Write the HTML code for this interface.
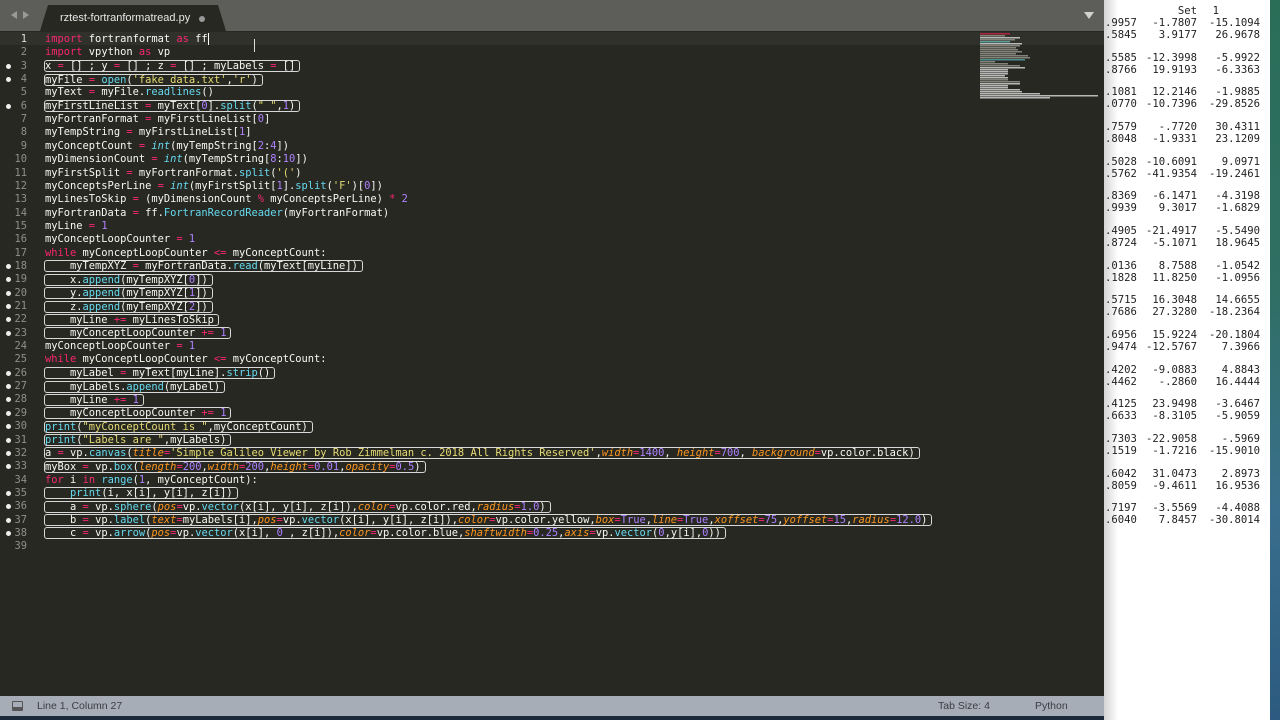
<!DOCTYPE html>
<html><head><meta charset="utf-8"><style>
*{margin:0;padding:0;box-sizing:border-box}
body{width:1280px;height:720px;overflow:hidden;background:#1c2b3b;position:relative;font-family:"DejaVu Sans Mono","Liberation Mono",monospace}
#tabbar{position:absolute;left:0;top:0;width:1104px;height:31px;background:#5d5e5a}
#tab{position:absolute;left:40px;top:5px;width:186px;height:26px;background:#272822;clip-path:polygon(8px 0,178px 0,186px 26px,0 26px)}
#tab span{position:absolute;left:20px;top:7px;font:11px "Liberation Sans",sans-serif;color:#e8e8e8}
#tab i{position:absolute;left:159px;top:11px;width:6px;height:6px;border-radius:50%;background:#999}
#editor{position:absolute;left:0;top:31px;width:1104px;height:665px;background:#272822}
#status{position:absolute;left:0;top:696px;width:1104px;height:20px;background:#a7adb7;font:10.5px "Liberation Sans",sans-serif;color:#3a3d44}
#lines{position:absolute;left:0;top:2px;width:1000px}
.ln{position:absolute;left:0;height:13.35px;width:1000px;font-size:10.4px;line-height:13.35px;color:#f8f8f2;white-space:pre}
.num{position:absolute;left:0;width:27px;text-align:right;color:#8f908a}
.dot{position:absolute;left:6px;top:4px;width:5px;height:5px;border-radius:50%;background:#eee}
.code{position:absolute;left:45px}
.bx{display:inline-block;height:12px;line-height:11px;border:1px solid #d8d8d8;border-radius:3px;margin-left:-1px;padding:0 4px 0 0;vertical-align:top;margin-top:0.5px}
.k{color:#f92672}.s{color:#e6db74}.n{color:#ae81ff}.f{color:#66d9ef}.i{color:#66d9ef;font-style:italic}.p{color:#fd971f;font-style:italic}.o{color:#f92672}
#right{position:absolute;left:1104px;top:0;width:166px;height:720px;background:#fff;font-size:10.6px;color:#222}
#right:before{content:"";position:absolute;left:0;top:0;width:14px;height:100%;background:linear-gradient(90deg,#d4d4d4,#fff)}
#desk{position:absolute;left:1270px;top:0;width:10px;height:720px;background:linear-gradient(#2a6e58,#2f6f64 40%,#3a6f8c 70%,#2c5a80)}
#data{position:absolute;left:0;top:2px}
.r{position:absolute;left:1105px;height:12px;line-height:12px;white-space:pre;font-size:10.6px;color:#222}
.r span{display:inline-block;text-align:right}
.r .a{width:33px;text-align:left}.r .b{width:59px}.r .c{width:63px}
</style></head><body>
<div id="tabbar">
<div style="position:absolute;left:11px;top:11px;width:0;height:0;border-top:4px solid transparent;border-bottom:4px solid transparent;border-right:6px solid #9a9a96"></div>
<div style="position:absolute;left:23px;top:11px;width:0;height:0;border-top:4px solid transparent;border-bottom:4px solid transparent;border-left:6px solid #9a9a96"></div>
<div id="tab"><span>rztest-fortranformatread.py</span><i></i></div>
<div style="position:absolute;left:1084px;top:12px;width:0;height:0;border-left:5px solid transparent;border-right:5px solid transparent;border-top:7px solid #d0d0d0"></div>
</div>
<div id="editor">
<div style="position:absolute;left:0;top:1px;width:1104px;height:13px;background:#30312b"></div>
<svg style="position:absolute;left:980px;top:2px" width="120" height="66">
<g fill="#9a9a90" opacity=".8">
<rect x="0" y="0" width="30" height="1.5" fill="#c24"/><rect x="0" y="2" width="25" height="1.5"/><rect x="0" y="4" width="40" height="1.5" fill="#ddd"/><rect x="0" y="6" width="35" height="1.5"/><rect x="0" y="8" width="30" height="1.5" fill="#6bb"/><rect x="0" y="10" width="42" height="1.5" fill="#ddd"/><rect x="0" y="12" width="40" height="1.5"/><rect x="0" y="14" width="36" height="1.5"/><rect x="0" y="16" width="38" height="1.5"/><rect x="0" y="18" width="42" height="1.5"/><rect x="0" y="20" width="36" height="1.5"/><rect x="0" y="22" width="48" height="1.5"/><rect x="0" y="24" width="50" height="1.5"/><rect x="0" y="26" width="45" height="1.5" fill="#5aa"/><rect x="0" y="28" width="15" height="1.5"/><rect x="0" y="30" width="28" height="1.5"/><rect x="0" y="32" width="40" height="1.5"/><rect x="0" y="34" width="45" height="1.5" fill="#ddd"/><rect x="0" y="36" width="28" height="1.5" fill="#ddd"/><rect x="0" y="38" width="28" height="1.5" fill="#ddd"/><rect x="0" y="40" width="28" height="1.5" fill="#ddd"/><rect x="0" y="42" width="25" height="1.5" fill="#ddd"/><rect x="0" y="44" width="28" height="1.5" fill="#ddd"/><rect x="0" y="46" width="28" height="1.5"/><rect x="0" y="48" width="40" height="1.5"/><rect x="0" y="50" width="40" height="1.5" fill="#ddd"/><rect x="0" y="52" width="28" height="1.5" fill="#ddd"/><rect x="0" y="54" width="28" height="1.5" fill="#ddd"/><rect x="0" y="56" width="40" height="1.5" fill="#ddd"/><rect x="0" y="58" width="42" height="1.5" fill="#ddd"/><rect x="0" y="60" width="60" height="1.5" fill="#ddd"/><rect x="0" y="62" width="118" height="1.5" fill="#ddd"/><rect x="0" y="64" width="70" height="1.5" fill="#ddd"/>
</g></svg>
</div>
<div id="lines">
<div class="ln" style="top:31px"><span class="num" style="color:#ddd">1</span><span class="code"><span class="k">import</span> fortranformat <span class="k">as</span> ff<span style="border-left:1px solid #fff"></span></span></div>
<div class="ln" style="top:44.35px"><span class="num">2</span><span class="code"><span class="k">import</span> vpython <span class="k">as</span> vp</span></div>
<div class="ln" style="top:57.7px"><i class="dot"></i><span class="num">3</span><span class="code"><span class="bx">x <span class="o">=</span> [] ; y <span class="o">=</span> [] ; z <span class="o">=</span> [] ; myLabels <span class="o">=</span> []</span></span></div>
<div class="ln" style="top:71.05px"><i class="dot"></i><span class="num">4</span><span class="code"><span class="bx">myFile <span class="o">=</span> <span class="f">open</span>(<span class="s">'fake data.txt'</span>,<span class="s">'r'</span>)</span></span></div>
<div class="ln" style="top:84.4px"><span class="num">5</span><span class="code">myText <span class="o">=</span> myFile.<span class="f">readlines</span>()</span></div>
<div class="ln" style="top:97.75px"><i class="dot"></i><span class="num">6</span><span class="code"><span class="bx">myFirstLineList <span class="o">=</span> myText[<span class="n">0</span>].<span class="f">split</span>(<span class="s">" "</span>,<span class="n">1</span>)</span></span></div>
<div class="ln" style="top:111.1px"><span class="num">7</span><span class="code">myFortranFormat <span class="o">=</span> myFirstLineList[<span class="n">0</span>]</span></div>
<div class="ln" style="top:124.45px"><span class="num">8</span><span class="code">myTempString <span class="o">=</span> myFirstLineList[<span class="n">1</span>]</span></div>
<div class="ln" style="top:137.8px"><span class="num">9</span><span class="code">myConceptCount <span class="o">=</span> <span class="i">int</span>(myTempString[<span class="n">2</span>:<span class="n">4</span>])</span></div>
<div class="ln" style="top:151.15px"><span class="num">10</span><span class="code">myDimensionCount <span class="o">=</span> <span class="i">int</span>(myTempString[<span class="n">8</span>:<span class="n">10</span>])</span></div>
<div class="ln" style="top:164.5px"><span class="num">11</span><span class="code">myFirstSplit <span class="o">=</span> myFortranFormat.<span class="f">split</span>(<span class="s">'('</span>)</span></div>
<div class="ln" style="top:177.85px"><span class="num">12</span><span class="code">myConceptsPerLine <span class="o">=</span> <span class="i">int</span>(myFirstSplit[<span class="n">1</span>].<span class="f">split</span>(<span class="s">'F'</span>)[<span class="n">0</span>])</span></div>
<div class="ln" style="top:191.2px"><span class="num">13</span><span class="code">myLinesToSkip <span class="o">=</span> (myDimensionCount <span class="o">%</span> myConceptsPerLine) <span class="o">*</span> <span class="n">2</span></span></div>
<div class="ln" style="top:204.55px"><span class="num">14</span><span class="code">myFortranData <span class="o">=</span> ff.<span class="f">FortranRecordReader</span>(myFortranFormat)</span></div>
<div class="ln" style="top:217.9px"><span class="num">15</span><span class="code">myLine <span class="o">=</span> <span class="n">1</span></span></div>
<div class="ln" style="top:231.25px"><span class="num">16</span><span class="code">myConceptLoopCounter <span class="o">=</span> <span class="n">1</span></span></div>
<div class="ln" style="top:244.6px"><span class="num">17</span><span class="code"><span class="k">while</span> myConceptLoopCounter <span class="o">&lt;=</span> myConceptCount:</span></div>
<div class="ln" style="top:257.95px"><i class="dot"></i><span class="num">18</span><span class="code"><span class="bx">    myTempXYZ <span class="o">=</span> myFortranData.<span class="f">read</span>(myText[myLine])</span></span></div>
<div class="ln" style="top:271.3px"><i class="dot"></i><span class="num">19</span><span class="code"><span class="bx">    x.<span class="f">append</span>(myTempXYZ[<span class="n">0</span>])</span></span></div>
<div class="ln" style="top:284.65px"><i class="dot"></i><span class="num">20</span><span class="code"><span class="bx">    y.<span class="f">append</span>(myTempXYZ[<span class="n">1</span>])</span></span></div>
<div class="ln" style="top:298px"><i class="dot"></i><span class="num">21</span><span class="code"><span class="bx">    z.<span class="f">append</span>(myTempXYZ[<span class="n">2</span>])</span></span></div>
<div class="ln" style="top:311.35px"><i class="dot"></i><span class="num">22</span><span class="code"><span class="bx">    myLine <span class="o">+=</span> myLinesToSkip</span></span></div>
<div class="ln" style="top:324.7px"><i class="dot"></i><span class="num">23</span><span class="code"><span class="bx">    myConceptLoopCounter <span class="o">+=</span> <span class="n">1</span></span></span></div>
<div class="ln" style="top:338.05px"><span class="num">24</span><span class="code">myConceptLoopCounter <span class="o">=</span> <span class="n">1</span></span></div>
<div class="ln" style="top:351.4px"><span class="num">25</span><span class="code"><span class="k">while</span> myConceptLoopCounter <span class="o">&lt;=</span> myConceptCount:</span></div>
<div class="ln" style="top:364.75px"><i class="dot"></i><span class="num">26</span><span class="code"><span class="bx">    myLabel <span class="o">=</span> myText[myLine].<span class="f">strip</span>()</span></span></div>
<div class="ln" style="top:378.1px"><i class="dot"></i><span class="num">27</span><span class="code"><span class="bx">    myLabels.<span class="f">append</span>(myLabel)</span></span></div>
<div class="ln" style="top:391.45px"><i class="dot"></i><span class="num">28</span><span class="code"><span class="bx">    myLine <span class="o">+=</span> <span class="n">1</span></span></span></div>
<div class="ln" style="top:404.8px"><i class="dot"></i><span class="num">29</span><span class="code"><span class="bx">    myConceptLoopCounter <span class="o">+=</span> <span class="n">1</span></span></span></div>
<div class="ln" style="top:418.15px"><i class="dot"></i><span class="num">30</span><span class="code"><span class="bx"><span class="f">print</span>(<span class="s">"myConceptCount is "</span>,myConceptCount)</span></span></div>
<div class="ln" style="top:431.5px"><i class="dot"></i><span class="num">31</span><span class="code"><span class="bx"><span class="f">print</span>(<span class="s">"Labels are "</span>,myLabels)</span></span></div>
<div class="ln" style="top:444.85px"><i class="dot"></i><span class="num">32</span><span class="code"><span class="bx">a <span class="o">=</span> vp.<span class="f">canvas</span>(<span class="p">title</span><span class="o">=</span><span class="s">'Simple Galileo Viewer by Rob Zimmelman c. 2018 All Rights Reserved'</span>,<span class="p">width</span><span class="o">=</span><span class="n">1400</span>, <span class="p">height</span><span class="o">=</span><span class="n">700</span>, <span class="p">background</span><span class="o">=</span>vp.color.black)</span></span></div>
<div class="ln" style="top:458.2px"><i class="dot"></i><span class="num">33</span><span class="code"><span class="bx">myBox <span class="o">=</span> vp.<span class="f">box</span>(<span class="p">length</span><span class="o">=</span><span class="n">200</span>,<span class="p">width</span><span class="o">=</span><span class="n">200</span>,<span class="p">height</span><span class="o">=</span><span class="n">0.01</span>,<span class="p">opacity</span><span class="o">=</span><span class="n">0.5</span>)</span></span></div>
<div class="ln" style="top:471.55px"><span class="num">34</span><span class="code"><span class="k">for</span> i <span class="k">in</span> <span class="f">range</span>(<span class="n">1</span>, myConceptCount):</span></div>
<div class="ln" style="top:484.9px"><i class="dot"></i><span class="num">35</span><span class="code"><span class="bx">    <span class="f">print</span>(i, x[i], y[i], z[i])</span></span></div>
<div class="ln" style="top:498.25px"><i class="dot"></i><span class="num">36</span><span class="code"><span class="bx">    a <span class="o">=</span> vp.<span class="f">sphere</span>(<span class="p">pos</span><span class="o">=</span>vp.<span class="f">vector</span>(x[i], y[i], z[i]),<span class="p">color</span><span class="o">=</span>vp.color.red,<span class="p">radius</span><span class="o">=</span><span class="n">1.0</span>)</span></span></div>
<div class="ln" style="top:511.6px"><i class="dot"></i><span class="num">37</span><span class="code"><span class="bx">    b <span class="o">=</span> vp.<span class="f">label</span>(<span class="p">text</span><span class="o">=</span>myLabels[i],<span class="p">pos</span><span class="o">=</span>vp.<span class="f">vector</span>(x[i], y[i], z[i]),<span class="p">color</span><span class="o">=</span>vp.color.yellow,<span class="p">box</span><span class="o">=</span><span class="n">True</span>,<span class="p">line</span><span class="o">=</span><span class="n">True</span>,<span class="p">xoffset</span><span class="o">=</span><span class="n">75</span>,<span class="p">yoffset</span><span class="o">=</span><span class="n">15</span>,<span class="p">radius</span><span class="o">=</span><span class="n">12.0</span>)</span></span></div>
<div class="ln" style="top:524.95px"><i class="dot"></i><span class="num">38</span><span class="code"><span class="bx">    c <span class="o">=</span> vp.<span class="f">arrow</span>(<span class="p">pos</span><span class="o">=</span>vp.<span class="f">vector</span>(x[i], <span class="n">0</span> , z[i]),<span class="p">color</span><span class="o">=</span>vp.color.blue,<span class="p">shaftwidth</span><span class="o">=</span><span class="n">0.25</span>,<span class="p">axis</span><span class="o">=</span>vp.<span class="f">vector</span>(<span class="n">0</span>,y[i],<span class="n">0</span>))</span></span></div>
<div class="ln" style="top:538.3px"><span class="num">39</span></div>
</div>
<div style="position:absolute;top:39px;width:8px;height:13px;border-left:1px solid #ddd;left:254px"></div>
<div id="status">
<div style="position:absolute;left:12px;top:5px;width:11px;height:10px;border:1px solid #555;border-bottom:4px solid #555;border-radius:1px"></div>
<span style="position:absolute;left:37px;top:4px">Line 1, Column 27</span>
<span style="position:absolute;left:938px;top:4px">Tab Size: 4</span>
<span style="position:absolute;left:1035px;top:4px">Python</span>
</div>
<div id="right"></div>
<div id="desk"></div>
<div id="data">
<div class="r" style="top:3px"><span class="a"></span><span class="b">Set</span><span style="display:inline-block;width:22px;text-align:right">1</span></div>
<div class="r" style="top:15px"><span class="a">.9957</span><span class="b">-1.7807</span><span class="c">-15.1094</span></div>
<div class="r" style="top:27px"><span class="a">.5845</span><span class="b">3.9177</span><span class="c">26.9678</span></div>
<div class="r" style="top:50px"><span class="a">.5585</span><span class="b">-12.3998</span><span class="c">-5.9922</span></div>
<div class="r" style="top:62px"><span class="a">.8766</span><span class="b">19.9193</span><span class="c">-6.3363</span></div>
<div class="r" style="top:84px"><span class="a">.1081</span><span class="b">12.2146</span><span class="c">-1.9885</span></div>
<div class="r" style="top:96px"><span class="a">.0770</span><span class="b">-10.7396</span><span class="c">-29.8526</span></div>
<div class="r" style="top:119px"><span class="a">.7579</span><span class="b">-.7720</span><span class="c">30.4311</span></div>
<div class="r" style="top:131px"><span class="a">.8048</span><span class="b">-1.9331</span><span class="c">23.1209</span></div>
<div class="r" style="top:154px"><span class="a">.5028</span><span class="b">-10.6091</span><span class="c">9.0971</span></div>
<div class="r" style="top:166px"><span class="a">.5762</span><span class="b">-41.9354</span><span class="c">-19.2461</span></div>
<div class="r" style="top:188px"><span class="a">.8369</span><span class="b">-6.1471</span><span class="c">-4.3198</span></div>
<div class="r" style="top:200px"><span class="a">.9939</span><span class="b">9.3017</span><span class="c">-1.6829</span></div>
<div class="r" style="top:223px"><span class="a">.4905</span><span class="b">-21.4917</span><span class="c">-5.5490</span></div>
<div class="r" style="top:235px"><span class="a">.8724</span><span class="b">-5.1071</span><span class="c">18.9645</span></div>
<div class="r" style="top:258px"><span class="a">.0136</span><span class="b">8.7588</span><span class="c">-1.0542</span></div>
<div class="r" style="top:270px"><span class="a">.1828</span><span class="b">11.8250</span><span class="c">-1.0956</span></div>
<div class="r" style="top:292px"><span class="a">.5715</span><span class="b">16.3048</span><span class="c">14.6655</span></div>
<div class="r" style="top:304px"><span class="a">.7686</span><span class="b">27.3280</span><span class="c">-18.2364</span></div>
<div class="r" style="top:327px"><span class="a">.6956</span><span class="b">15.9224</span><span class="c">-20.1804</span></div>
<div class="r" style="top:339px"><span class="a">.9474</span><span class="b">-12.5767</span><span class="c">7.3966</span></div>
<div class="r" style="top:362px"><span class="a">.4202</span><span class="b">-9.0883</span><span class="c">4.8843</span></div>
<div class="r" style="top:374px"><span class="a">.4462</span><span class="b">-.2860</span><span class="c">16.4444</span></div>
<div class="r" style="top:396px"><span class="a">.4125</span><span class="b">23.9498</span><span class="c">-3.6467</span></div>
<div class="r" style="top:408px"><span class="a">.6633</span><span class="b">-8.3105</span><span class="c">-5.9059</span></div>
<div class="r" style="top:431px"><span class="a">.7303</span><span class="b">-22.9058</span><span class="c">-.5969</span></div>
<div class="r" style="top:443px"><span class="a">.1519</span><span class="b">-1.7216</span><span class="c">-15.9010</span></div>
<div class="r" style="top:466px"><span class="a">.6042</span><span class="b">31.0473</span><span class="c">2.8973</span></div>
<div class="r" style="top:478px"><span class="a">.8059</span><span class="b">-9.4611</span><span class="c">16.9536</span></div>
<div class="r" style="top:500px"><span class="a">.7197</span><span class="b">-3.5569</span><span class="c">-4.4088</span></div>
<div class="r" style="top:512px"><span class="a">.6040</span><span class="b">7.8457</span><span class="c">-30.8014</span></div>
</div>
</body></html>
